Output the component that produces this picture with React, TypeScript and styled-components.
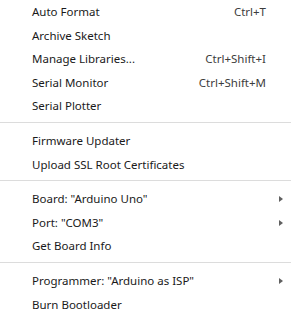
import React from "react";
import styled, { createGlobalStyle } from "styled-components";

const GlobalStyle = createGlobalStyle`
  html, body {
    margin: 0;
    padding: 0;
    background: #ffffff;
  }
`;

type Item = {
  label: string;
  shortcut?: string;
  submenu?: boolean;
};

const groups: Item[][] = [
  [
    { label: "Auto Format", shortcut: "Ctrl+T" },
    { label: "Archive Sketch" },
    { label: "Manage Libraries...", shortcut: "Ctrl+Shift+I" },
    { label: "Serial Monitor", shortcut: "Ctrl+Shift+M" },
    { label: "Serial Plotter" },
  ],
  [{ label: "Firmware Updater" }, { label: "Upload SSL Root Certificates" }],
  [
    { label: "Board: \"Arduino Uno\"", submenu: true },
    { label: "Port: \"COM3\"", submenu: true },
    { label: "Get Board Info" },
  ],
  [
    { label: "Programmer: \"Arduino as ISP\"", submenu: true },
    { label: "Burn Bootloader" },
  ],
];

const App: React.FC = () => {
  return (
    <>
      <GlobalStyle />
      <Menu>
        {groups.map((group, gi) => (
          <React.Fragment key={gi}>
            {gi > 0 && <Separator />}
            {group.map((item, index) => (
              <Row key={index}>
                <Label>{item.label}</Label>
                <Shortcut>{item.shortcut}</Shortcut>
                <Arrow>{item.submenu && <ArrowShape />}</Arrow>
              </Row>
            ))}
          </React.Fragment>
        ))}
      </Menu>
    </>
  );
};

export default App;

const Menu = styled.div`
  width: 291px;
  height: 316px;
  overflow: hidden;
  background: #ffffff;
  display: flex;
  flex-direction: column;
  font-family: "Noto Sans", "Open Sans", sans-serif;
  font-size: 11.5px;
  color: #1a1a1a;
`;

const Row = styled.div`
  height: 23.6px;
  flex-shrink: 0;
  display: grid;
  grid-template-columns: 1fr auto 25px;
  align-items: center;
  padding-left: 32px;
  box-sizing: border-box;
`;

const Label = styled.span`
  white-space: nowrap;
  line-height: 1;
`;

const Shortcut = styled.span`
  white-space: nowrap;
  color: #3c3c3c;
  line-height: 1;
`;

const Arrow = styled.span`
  display: flex;
  align-items: center;
  justify-content: flex-start;
  padding-left: 13px;
`;

const ArrowShape = styled.span`
  width: 0;
  height: 0;
  border-top: 3px solid transparent;
  border-bottom: 3px solid transparent;
  border-left: 4px solid #606060;
`;

const Separator = styled.div`
  flex-shrink: 0;
  height: 1px;
  margin: 4px 0 6px;
  background: #dcdcdc;
`;
